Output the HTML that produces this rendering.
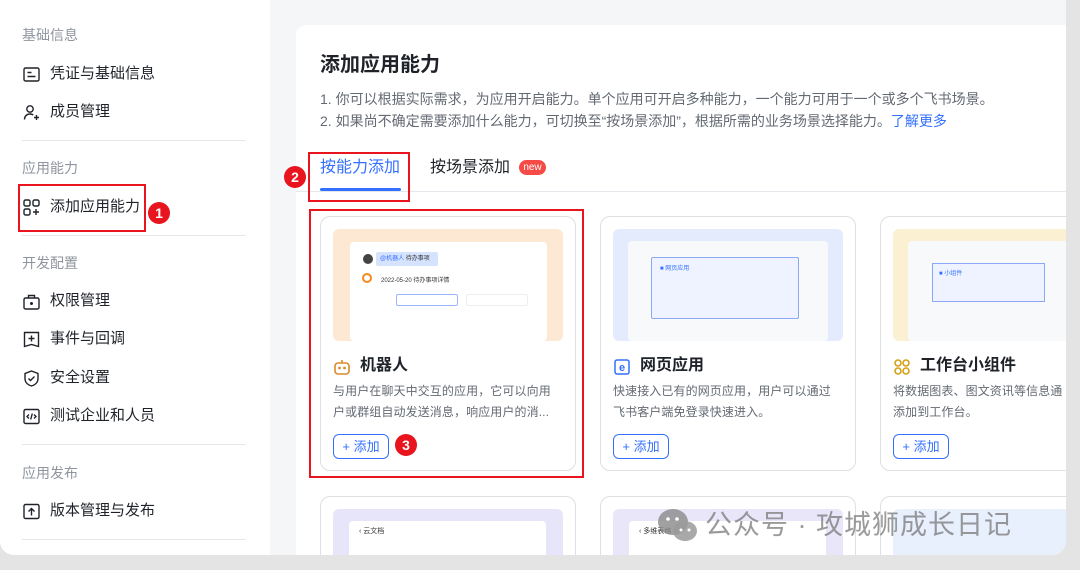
<!DOCTYPE html>
<html><head><meta charset="utf-8"><style>
*{margin:0;padding:0;box-sizing:border-box}
body{width:1080px;height:570px;overflow:hidden;background:#e4e4e4;font-family:"Liberation Sans","Noto Sans CJK SC",sans-serif;position:relative;color:#1f2329}
.abs{position:absolute}
.win{left:0;top:0;width:1066px;height:555px;background:#f5f6f7;border-radius:0 0 14px 14px;overflow:hidden}
.side{left:0;top:0;width:270px;height:555px;background:#fff}
.gh{left:22px;font-size:14px;color:#8f959e;line-height:20px}
.it{left:50px;font-size:15px;color:#1f2329;line-height:20px}
.ic{left:23px;width:17px;height:17px}
.dv{left:22px;width:224px;height:1px;background:#e5e6eb}
.badge{width:22px;height:22px;border-radius:50%;background:#e8141e;color:#fff;font-size:14px;font-weight:bold;text-align:center;line-height:22px}
.red{border:2.5px solid #e8141e}
.main{left:296px;top:25px;width:800px;height:560px;background:#fff;border-radius:10px}
.card{width:256px;height:255px;border:1px solid #dee0e3;border-radius:10px;background:#fff;overflow:hidden}
.img{left:12px;top:12px;width:230px;height:112px;border-radius:6px}
.ct{left:12px;top:138px;font-size:16px;font-weight:bold;line-height:22px;padding-left:27px}
.cd{left:12px;top:164px;width:240px;font-size:12px;letter-spacing:0.1px;color:#646a73;line-height:21px;white-space:nowrap}
.btn{left:12px;top:217px;width:56px;height:25px;border:1px solid #3370ff;border-radius:6px;color:#3370ff;font-size:13px;line-height:23px;text-align:center}
</style></head><body>
<div class="abs win">
<div class="abs side">
<div class="abs gh" style="top:25px">基础信息</div>
<svg class="abs ic" style="top:66px" viewBox="0 0 17 17" fill="none" stroke="#1f2329" stroke-width="1.4"><rect x="1" y="2" width="15" height="13" rx="1.5"/><path d="M4.5 6.5h4M4.5 10.5h8"/></svg>
<div class="abs it" style="top:64px">凭证与基础信息</div>
<svg class="abs ic" style="top:104px" viewBox="0 0 17 17" fill="none" stroke="#1f2329" stroke-width="1.4"><circle cx="7" cy="5" r="3.2"/><path d="M1.5 15.5c0-3.5 2.5-5.5 5.5-5.5 1.5 0 2.5.4 3.3 1M11 13.5h5M13.5 11v5"/></svg>
<div class="abs it" style="top:102px">成员管理</div>
<div class="abs dv" style="top:140px"></div>
<div class="abs gh" style="top:158px">应用能力</div>
<svg class="abs ic" style="top:199px" viewBox="0 0 17 17" fill="none" stroke="#1f2329" stroke-width="1.4"><rect x="1" y="1" width="6" height="6" rx="1.5"/><rect x="10" y="1" width="6" height="6" rx="1.5"/><rect x="1" y="10" width="6" height="6" rx="1.5"/><path d="M10 13h6M13 10v6"/></svg>
<div class="abs it" style="top:197px">添加应用能力</div>
<div class="abs red" style="left:18px;top:184px;width:128px;height:48px"></div>
<div class="abs badge" style="left:148px;top:202px">1</div>
<div class="abs dv" style="top:235px"></div>
<div class="abs gh" style="top:253px">开发配置</div>
<svg class="abs ic" style="top:293px" viewBox="0 0 17 17" fill="none" stroke="#1f2329" stroke-width="1.4"><rect x="1" y="5" width="15" height="11" rx="1.5"/><path d="M5.5 5V2.5h6V5"/><circle cx="8.5" cy="10.5" r=".8" fill="#1f2329"/></svg>
<div class="abs it" style="top:291px">权限管理</div>
<svg class="abs ic" style="top:331px" viewBox="0 0 17 17" fill="none" stroke="#1f2329" stroke-width="1.4"><path d="M1.5 1.5h14v14l-7-2-7 2z"/><path d="M5.5 7.5h6M8.5 4.5v6"/></svg>
<div class="abs it" style="top:329px">事件与回调</div>
<svg class="abs ic" style="top:370px" viewBox="0 0 17 17" fill="none" stroke="#1f2329" stroke-width="1.4"><path d="M8.5 1l6.5 2.5v5c0 4-3 6.5-6.5 7.5C5 15 2 12.5 2 8.5v-5z"/><path d="M5.5 8.5l2 2 4-4"/></svg>
<div class="abs it" style="top:368px">安全设置</div>
<svg class="abs ic" style="top:408px" viewBox="0 0 17 17" fill="none" stroke="#1f2329" stroke-width="1.4"><rect x="1" y="1.5" width="15" height="14" rx="1.5"/><path d="M6 6.5l-2 2 2 2M11 6.5l2 2-2 2M9.3 5.5l-1.6 6"/></svg>
<div class="abs it" style="top:406px">测试企业和人员</div>
<div class="abs dv" style="top:444px"></div>
<div class="abs gh" style="top:463px">应用发布</div>
<svg class="abs ic" style="top:503px" viewBox="0 0 17 17" fill="none" stroke="#1f2329" stroke-width="1.4"><rect x="1" y="1.5" width="15" height="14" rx="1.5"/><path d="M8.5 12.5v-7M5.5 8.5l3-3 3 3"/></svg>
<div class="abs it" style="top:501px">版本管理与发布</div>
<div class="abs dv" style="top:539px"></div>
</div>

<div class="abs main">
<div class="abs" style="left:24px;top:26px;font-size:20px;font-weight:bold;line-height:28px">添加应用能力</div>
<div class="abs" style="left:24px;top:63px;font-size:14px;color:#646a73;line-height:22px;white-space:nowrap">1. 你可以根据实际需求，为应用开启能力。单个应用可开启多种能力，一个能力可用于一个或多个飞书场景。<br>2. 如果尚不确定需要添加什么能力，可切换至“按场景添加”，根据所需的业务场景选择能力。<span style="color:#3370ff">了解更多</span></div>
<div class="abs" style="left:24px;top:131px;font-size:16px;color:#3370ff;line-height:24px">按能力添加</div>
<div class="abs" style="left:24px;top:163px;width:81px;height:3px;background:#3370ff;border-radius:2px"></div>
<div class="abs" style="left:134px;top:131px;font-size:16px;color:#1f2329;line-height:24px">按场景添加</div>
<div class="abs" style="left:223px;top:135px;width:27px;height:15px;border-radius:8px;background:#f54a45;color:#fff;font-size:10px;line-height:15px;text-align:center">new</div>
<div class="abs" style="left:0;top:166px;width:800px;height:1px;background:#e5e6eb"></div>

<div class="abs card" style="left:24px;top:191px">
 <div class="abs img" style="background:#fde9d3">
  <div class="abs" style="left:17px;top:13px;width:197px;height:99px;background:#fff;border-radius:4px"></div>
  <div class="abs" style="left:30px;top:25px;width:10px;height:10px;border-radius:50%;background:#444"></div>
  <div class="abs" style="left:43px;top:23px;width:62px;height:14px;background:#d6e3ff;border-radius:2px;font-size:6px;line-height:14px;padding-left:4px;color:#3370ff">@机器人 <span style="color:#333">待办事项</span></div>
  <div class="abs" style="left:29px;top:44px;width:10px;height:10px;border-radius:50%;border:2px solid #f58a1f"></div>
  <div class="abs" style="left:48px;top:46px;font-size:6px;color:#333">2022-05-20 待办事项详情</div>
  <div class="abs" style="left:63px;top:65px;width:62px;height:12px;border:1px solid #9bb5ff;border-radius:2px"></div>
  <div class="abs" style="left:133px;top:65px;width:62px;height:12px;border:1px solid #eee;border-radius:2px"></div>
 </div>
 <svg class="abs" style="left:12px;top:141px" width="18" height="18" viewBox="0 0 18 18" fill="none" stroke="#d98a2b" stroke-width="1.6"><rect x="2" y="5" width="14" height="11" rx="3"/><path d="M9 5V2"/><circle cx="6.5" cy="10" r=".6" fill="#d98a2b"/><circle cx="11.5" cy="10" r=".6" fill="#d98a2b"/></svg>
 <div class="abs ct">机器人</div>
 <div class="abs cd">与用户在聊天中交互的应用，它可以向用<br>户或群组自动发送消息，响应用户的消...</div>
 <div class="abs btn">+ 添加</div>
</div>
<div class="abs red" style="left:13px;top:184px;width:275px;height:269px"></div>
<div class="abs badge" style="left:99px;top:409px">3</div>

<div class="abs card" style="left:304px;top:191px">
 <div class="abs img" style="background:#e3ebfd">
  <div class="abs" style="left:15px;top:12px;width:200px;height:100px;background:#f8f9fb;border-radius:4px"></div>
  <div class="abs" style="left:38px;top:28px;width:148px;height:62px;border:1.5px solid #8aa8f5;background:#eef3ff;border-radius:2px;font-size:6px;color:#3370ff;padding:5px 8px">■ 网页应用</div>
 </div>
 <svg class="abs" style="left:12px;top:141px" width="18" height="18" viewBox="0 0 18 18"><rect x="2" y="2" width="14" height="14" rx="2" fill="none" stroke="#3370ff" stroke-width="1.5"/><text x="9" y="13" font-size="11" text-anchor="middle" fill="#3370ff" font-family="Liberation Sans" font-weight="bold">e</text></svg>
 <div class="abs ct">网页应用</div>
 <div class="abs cd">快速接入已有的网页应用，用户可以通过<br>飞书客户端免登录快速进入。</div>
 <div class="abs btn">+ 添加</div>
</div>

<div class="abs card" style="left:584px;top:191px">
 <div class="abs img" style="background:#fbf0d2;width:244px">
  <div class="abs" style="left:15px;top:12px;width:230px;height:100px;background:#f8f9fb;border-radius:4px"></div>
  <div class="abs" style="left:39px;top:34px;width:113px;height:39px;border:1.5px solid #8aa8f5;background:#eef3ff;font-size:6px;color:#3370ff;padding:4px 6px">■ 小组件</div>
 </div>
 <svg class="abs" style="left:12px;top:141px" width="18" height="18" viewBox="0 0 18 18" fill="none" stroke="#d4a017" stroke-width="1.6"><circle cx="5" cy="5" r="3"/><circle cx="13" cy="5" r="3"/><circle cx="5" cy="13" r="3"/><circle cx="13" cy="13" r="3"/></svg>
 <div class="abs ct">工作台小组件</div>
 <div class="abs cd">将数据图表、图文资讯等信息通<br>添加到工作台。</div>
 <div class="abs btn">+ 添加</div>
</div>

<div class="abs card" style="left:24px;top:471px;height:100px"><div class="abs img" style="background:#e6e5fa;height:80px"><div class="abs" style="left:16px;top:12px;width:197px;height:70px;background:#fff;border-radius:4px;font-size:7px;color:#333;padding:5px 10px">‹ 云文档</div></div></div>
<div class="abs card" style="left:304px;top:471px;height:100px"><div class="abs img" style="background:#e9e6fa;height:80px"><div class="abs" style="left:16px;top:12px;width:197px;height:70px;background:#fff;border-radius:4px;font-size:7px;color:#333;padding:5px 10px">‹ 多维表格</div></div></div>
<div class="abs card" style="left:584px;top:471px;height:100px"><div class="abs img" style="background:#e8effd;height:80px"></div></div>
</div>

<div class="abs red" style="left:308px;top:152px;width:102px;height:50px"></div>
<div class="abs badge" style="left:284px;top:166px">2</div>

<svg class="abs" style="left:655px;top:505px" width="46" height="40" viewBox="0 0 46 40"><ellipse cx="18" cy="17" rx="15" ry="13" fill="#8a8a8a" opacity=".8"/><ellipse cx="30" cy="26" rx="12" ry="10" fill="#9a9a9a" opacity=".85"/><circle cx="13" cy="14" r="1.8" fill="#fff"/><circle cx="22" cy="14" r="1.8" fill="#fff"/><circle cx="26" cy="25" r="1.5" fill="#fff"/><circle cx="34" cy="25" r="1.5" fill="#fff"/></svg>
<div class="abs" style="left:705px;top:508px;font-size:27px;color:rgba(120,120,120,.75);line-height:34px;white-space:nowrap;letter-spacing:1px">公众号 · 攻城狮成长日记</div>
</div>
</body></html>
